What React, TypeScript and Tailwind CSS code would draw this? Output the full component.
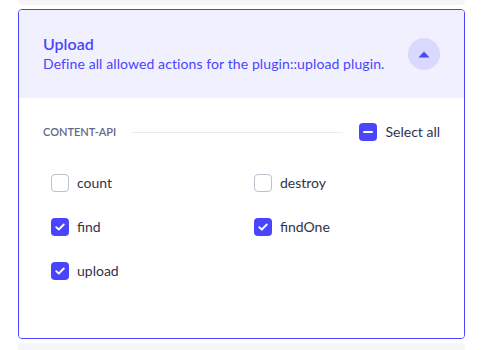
import React, { useState } from "react";

const items = [
  { id: "count", checked: false },
  { id: "destroy", checked: false },
  { id: "find", checked: true },
  { id: "findOne", checked: true },
  { id: "upload", checked: true },
];

function Box({ checked, indeterminate }: { checked?: boolean; indeterminate?: boolean }) {
  if (indeterminate) {
    return (
      <span className="flex h-[18px] w-[18px] shrink-0 items-center justify-center rounded bg-[#4945ff]">
        <span className="h-[2px] w-[10px] rounded-sm bg-white" />
      </span>
    );
  }
  if (checked) {
    return (
      <span className="flex h-[18px] w-[18px] shrink-0 items-center justify-center rounded bg-[#4945ff]">
        <svg width="10" height="8" viewBox="0 0 10 8" fill="none">
          <path d="M1.2 4.1 L3.8 6.5 L8.8 1.5" stroke="white" strokeWidth="1.8" strokeLinecap="round" strokeLinejoin="round" />
        </svg>
      </span>
    );
  }
  return <span className="h-[18px] w-[18px] shrink-0 rounded border border-[#c0c0cf] bg-white" />;
}

export default function App() {
  const [state, setState] = useState(items);

  const toggle = (id: string) =>
    setState((s) => s.map((i) => (i.id === id ? { ...i, checked: !i.checked } : i)));

  return (
    <div className="h-[350px] w-[483px] overflow-hidden bg-white px-[18px] font-['Lato',sans-serif]">
      {/* previous accordion, cut off at the top */}
      <div className="h-[5px] rounded-b bg-[#f6f6f9]" />

      <div className="mt-1 overflow-hidden rounded border border-[#4945ff]">
        <div className="flex h-[88px] items-center justify-between bg-[#f0f0ff] px-6">
          <div className="flex flex-col">
            <span className="text-base leading-5 font-semibold text-[#4945ff]">Upload</span>
            <span className="text-sm leading-5 tracking-[0.1px] text-[#4945ff]">
              Define all allowed actions for the plugin::upload plugin.
            </span>
          </div>
          <button className="flex h-8 w-8 items-center justify-center rounded-full bg-[#d9d8ff]">
            <svg width="12" height="7" viewBox="0 0 12 7">
              <path d="M6 0.5 L11.5 6.5 L0.5 6.5 Z" fill="#4945ff" />
            </svg>
          </button>
        </div>

        <div className="h-[240px] bg-white px-6 pt-[25px]">
          <div className="flex h-[18px] items-center">
            <span className="text-[11px] font-semibold uppercase text-[#666687]">content-api</span>
            <div className="mx-4 h-px flex-1 bg-[#eaeaef]" />
            <label className="flex items-center gap-[9px] text-sm text-[#32324d]">
              <Box indeterminate />
              Select all
            </label>
          </div>

          <div className="mt-[33px] grid grid-cols-[203px_1fr] gap-y-[26px]">
            {state.map((i) => (
              <label
                key={i.id}
                onClick={() => toggle(i.id)}
                className="flex h-[18px] cursor-pointer items-center gap-2 pl-2 text-sm text-[#32324d]"
              >
                <Box checked={i.checked} />
                {i.id}
              </label>
            ))}
          </div>
        </div>
      </div>

      <div className="mt-1 h-4 rounded-t bg-[#f6f6f9]" />
    </div>
  );
}
